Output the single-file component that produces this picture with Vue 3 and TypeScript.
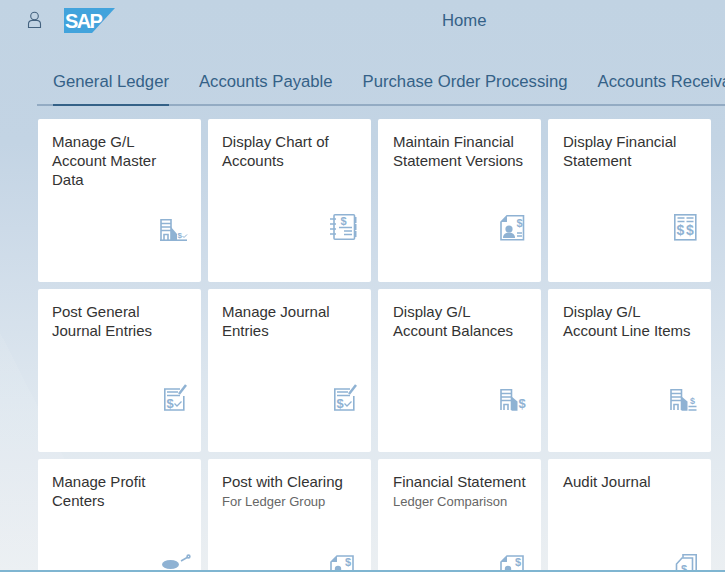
<script setup lang="ts">
interface Tile { title: string; sub?: string; icon: string }
const tabs: string[] = ['General Ledger', 'Accounts Payable', 'Purchase Order Processing', 'Accounts Receivable']
const tiles: Tile[] = [
  { title: 'Manage G/L\nAccount Master\nData', icon: 'chart' },
  { title: 'Display Chart of\nAccounts', icon: 'book' },
  { title: 'Maintain Financial\nStatement Versions', icon: 'person' },
  { title: 'Display Financial\nStatement', icon: 'doubledollar' },
  { title: 'Post General\nJournal Entries', icon: 'post' },
  { title: 'Manage Journal\nEntries', icon: 'post' },
  { title: 'Display G/L\nAccount Balances', icon: 'bdollar' },
  { title: 'Display G/L\nAccount Line Items', icon: 'blines' },
  { title: 'Manage Profit\nCenters', icon: 'pan' },
  { title: 'Post with Clearing', sub: 'For Ledger Group', icon: 'doc' },
  { title: 'Financial Statement', sub: 'Ledger Comparison', icon: 'doc' },
  { title: 'Audit Journal', icon: 'docs' },
]
</script>

<template>
  <div class="page">
    <header class="head">
      <svg class="user" viewBox="0 0 15 18" fill="none" stroke="#44627f" stroke-width="1.1">
        <circle cx="7.5" cy="5" r="3.8" />
        <path d="M1.5 16.5v-3.5c0-2 1.5-3.4 3.5-3.6h5c2 .2 3.5 1.6 3.5 3.6v3.500z" />
      </svg>
      <div class="logo"><span>SAP</span></div>
      <div class="home">Home</div>
    </header>
    <nav class="tabs">
      <a v-for="(t, i) in tabs" :key="t" class="tab" :class="{ active: i === 0 }">{{ t }}</a>
    </nav>
    <main class="grid">
      <section v-for="t in tiles" :key="t.title + t.icon" class="tile">
        <div class="title">{{ t.title }}</div>
        <div v-if="t.sub" class="sub">{{ t.sub }}</div>
        <svg class="icon" viewBox="0 0 28 28" fill="none" stroke="#8fb2d3" stroke-width="1.6">
          <template v-if="t.icon === 'chart'">
            <path d="M2 27V6.800h10V27M2 10.500h10M2 14h10M2 17.500h10M5 27v-5.500h4V27" />
            <path d="M12 14l6 7v6h-6z" fill="#8fb2d3" stroke="none" />
            <path d="M1 27.200h27" />
            <text x="18.500" y="25" class="g">$</text>
            <path d="M23.500 23l1.500 1.500 3-3" stroke-width="1" />
          </template>
          <template v-else-if="t.icon === 'book'">
            <rect x="5" y="1.800" width="20.500" height="24.400" rx="1" />
            <path d="M1 6h6M1 11h6M1 16h6M1 21h6M10 14.500h13M15 18h8M15 21.500h8" />
            <path d="M26 4h1.500v6H26zM26 11h1.500v6H26zM26 18h1.500v6H26z" fill="#8fb2d3" stroke="none" />
            <text x="11.500" y="12" class="g big">$</text>
          </template>
          <template v-else-if="t.icon === 'person'">
            <path d="M8 2.800h16.500v24H2V9z" />
            <path d="M2 9h6V3" fill="#8fb2d3" stroke="none" />
            <circle cx="10" cy="16" r="3.600" fill="#8fb2d3" stroke="none" />
            <path d="M4 25c0-4 3-5.500 6-5.500s6 1.500 6 5.500z" fill="#8fb2d3" stroke="none" />
            <path d="M18 20h5M18 23h5" />
            <text x="17.500" y="14" class="g big">$</text>
          </template>
          <template v-else-if="t.icon === 'doubledollar'">
            <rect x="5.800" y="1.800" width="21" height="25" />
            <path d="M8.500 5h7M17.500 5h7M8.500 8.500h7M17.500 8.500h7" />
            <text x="7.500" y="22" class="g big2">$</text>
            <text x="17" y="22" class="g big2">$</text>
          </template>
          <template v-else-if="t.icon === 'post'">
            <path d="M21 6H5.800v21h19V13" />
            <path d="M8 9h11M8 12.500h13" />
            <path d="M20 11l7-9" stroke-width="2.500" />
            <text x="7.500" y="24.500" class="g big3">$</text>
            <path d="M15.500 20.500l2.500 2.500 4.500-4.500" stroke-width="1.300" />
          </template>
          <template v-else-if="t.icon === 'bdollar' || t.icon === 'blines'">
            <path d="M2 27V6.800h10.500V27M2 10.500h10.500M2 14h10.500M2 17.500h10.500M5 27v-5.500h4V27" />
            <path d="M12.500 13.500l6 5V27.800h-6z" fill="#8fb2d3" stroke="none" />
            <text v-if="t.icon === 'bdollar'" x="19.500" y="25" class="g big3">$</text>
            <template v-else>
              <text x="21" y="21" class="g big4">$</text>
              <path d="M19.500 23.500h8M19.500 27h8" />
            </template>
          </template>
          <template v-else-if="t.icon === 'pan'">
            <ellipse cx="11.500" cy="11.500" rx="8.500" ry="4.500" fill="#8fb2d3" stroke="none" />
            <path d="M22 8l7-4" />
            <circle cx="29.500" cy="3.500" r="1.400" />
            <path d="M3 17v4h17v-4" />
          </template>
          <template v-else-if="t.icon === 'doc'">
            <path d="M8 3h16v24H2V9z" />
            <path d="M2 9h6V3" fill="#8fb2d3" stroke="none" />
            <circle cx="9" cy="16" r="3.200" fill="#8fb2d3" stroke="none" />
            <text x="16" y="13" class="g big">$</text>
          </template>
          <template v-else>
            <path d="M14 4.800V1.800h13.200v22" />
            <path d="M13 5h10.500v22H7.500V11z" />
            <text x="12" y="20" class="g big">$</text>
          </template>
        </svg>
      </section>
    </main>
    <div class="foot"></div>
  </div>
</template>

<style>
html, body { margin: 0; padding: 0; }
</style>

<style scoped>
.page {
  width: 725px;
  height: 572px;
  overflow: hidden;
  display: flex;
  flex-direction: column;
  background:
    linear-gradient(243deg, transparent 88%, rgba(255, 255, 255, 0.07) 88%),
    linear-gradient(180deg, #c1d3e3 0%, #c3d4e4 25%, #ccdae8 40%, #dee7ef 70%, #ebeff2 100%);
  font-family: "Liberation Sans", Arial, sans-serif;
}
.head {
  flex: none;
  height: 40px;
  display: flex;
  align-items: flex-start;
  padding-left: 27px;
}
.user { width: 15px; height: 18px; margin-top: 11px; flex: none; }
.logo {
  flex: none;
  width: 51px;
  height: 25px;
  margin: 8px 0 0 22px;
  background: #42a3dc;
  clip-path: polygon(0 0, 100% 0, 55% 100%, 0 100%);
  color: #fff;
  font-weight: 700;
  font-size: 20px;
  line-height: 26px;
  letter-spacing: -1.6px;
  padding-left: 1px;
  box-sizing: border-box;
}
.home {
  margin: 11px 0 0 327px;
  font-size: 16.7px;
  line-height: 20px;
  color: #346187;
}
.tabs {
  flex: none;
  height: 66px;
  box-sizing: border-box;
  margin-left: 37px;
  padding-left: 16px;
  display: flex;
  gap: 30px;
  align-items: stretch;
  border-bottom: 2px solid #93abc3;
  white-space: nowrap;
}
.tab {
  flex: none;
  font-size: 16.7px;
  line-height: 20px;
  padding-top: 32px;
  color: #346187;
  margin-bottom: -2px;
  border-bottom: 2px solid transparent;
}
.tab.active { border-bottom-color: #346187; }
.grid {
  flex: 1;
  min-height: 0;
  overflow: hidden;
  padding: 13px 0 0 38px;
  display: grid;
  grid-template-columns: repeat(4, 163px);
  grid-auto-rows: 163px;
  gap: 7px;
  align-content: start;
}
.tile {
  position: relative;
  background: #fff;
  border-radius: 2px;
  padding: 13px 14px 0;
  box-sizing: border-box;
  height: 163px;
  display: flex;
  flex-direction: column;
}
.tile:nth-child(4n + 3),
.tile:nth-child(4n) { padding-left: 15px; }
.title {
  font-size: 15px;
  line-height: 19px;
  color: #333;
  white-space: pre-line;
}
.sub {
  font-size: 13px;
  line-height: 16px;
  margin-top: 3px;
  color: #666;
}
.icon {
  width: 28px;
  height: 28px;
  position: absolute;
  right: 14px;
  bottom: 41px;
  overflow: visible;
}
.g {
  fill: #8fb2d3;
  stroke: none;
  font-size: 8px;
  font-weight: 700;
  font-family: "Liberation Sans", Arial, sans-serif;
}
.g.big { font-size: 11px; }
.g.big2 { font-size: 14px; }
.g.big3 { font-size: 13px; }
.g.big4 { font-size: 9px; }
.foot {
  flex: none;
  height: 2px;
  background: #7fb5d1;
}
</style>
